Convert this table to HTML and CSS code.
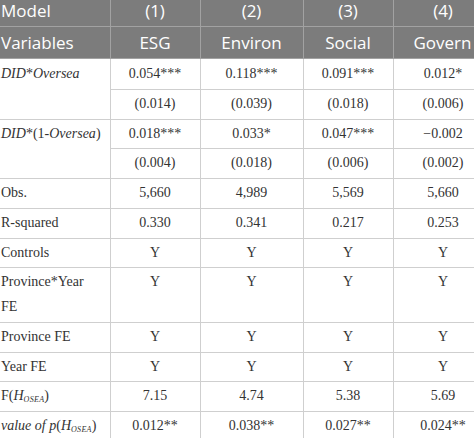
FILE: index.html
```html
<!DOCTYPE html>
<html>
<head>
<meta charset="utf-8">
<link rel="stylesheet" href="styles.css">
</head>
<body>
<table class="tbl">
  <colgroup>
    <col class="c0"><col class="c1"><col class="c2"><col class="c3"><col class="c4">
  </colgroup>
  <thead>
    <tr class="h1">
      <th class="lab">Model</th><th>(1)</th><th>(2)</th><th>(3)</th><th>(4)</th>
    </tr>
    <tr class="h2">
      <th class="lab">Variables</th><th>ESG</th><th>Environ</th><th>Social</th><th class="trunc">Govern</th>
    </tr>
  </thead>
  <tbody>
    <tr class="first">
      <td class="lab top nowrap" rowspan="2"><i>DID</i>*<i>Oversea</i></td>
      <td>0.054***</td><td>0.118***</td><td>0.091***</td><td>0.012*</td>
    </tr>
    <tr>
      <td>(0.014)</td><td>(0.039)</td><td>(0.018)</td><td>(0.006)</td>
    </tr>
    <tr>
      <td class="lab top nowrap" rowspan="2"><i>DID</i>*(1-<i>Oversea</i>)</td>
      <td>0.018***</td><td>0.033*</td><td>0.047***</td><td>−0.002</td>
    </tr>
    <tr>
      <td>(0.004)</td><td>(0.018)</td><td>(0.006)</td><td>(0.002)</td>
    </tr>
    <tr>
      <td class="lab">Obs.</td><td>5,660</td><td>4,989</td><td>5,569</td><td>5,660</td>
    </tr>
    <tr>
      <td class="lab">R-squared</td><td>0.330</td><td>0.341</td><td>0.217</td><td>0.253</td>
    </tr>
    <tr>
      <td class="lab">Controls</td><td>Y</td><td>Y</td><td>Y</td><td>Y</td>
    </tr>
    <tr class="tall">
      <td class="lab">Province*Year FE</td><td>Y</td><td>Y</td><td>Y</td><td>Y</td>
    </tr>
    <tr>
      <td class="lab">Province FE</td><td>Y</td><td>Y</td><td>Y</td><td>Y</td>
    </tr>
    <tr>
      <td class="lab">Year FE</td><td>Y</td><td>Y</td><td>Y</td><td>Y</td>
    </tr>
    <tr>
      <td class="lab">F(<i>H<sub>OSEA</sub></i>)</td><td>7.15</td><td>4.74</td><td>5.38</td><td>5.69</td>
    </tr>
    <tr>
      <td class="lab nowrap"><i>value of p</i>(<i>H<sub>OSEA</sub></i>)</td><td>0.012**</td><td>0.038**</td><td>0.027**</td><td>0.024**</td>
    </tr>
  </tbody>
</table>
</body>
</html>
```

FILE: styles.css
```css
html, body {
  margin: 0;
  padding: 0;
  background: #ffffff;
  overflow: hidden;
}

.tbl {
  border-collapse: collapse;
  table-layout: fixed;
  width: 493px;
}

.c0 { width: 110px; }
.c1 { width: 90px; }
.c2 { width: 103px; }
.c3 { width: 90px; }
.c4 { width: 100px; }

.tbl th {
  background: #7c7c7c;
  color: #ffffff;
  font-family: "Open Sans", "DejaVu Sans", sans-serif;
  font-weight: normal;
  font-size: 17px;
  text-align: center;
  padding: 0 4px;
  border: 1px solid #a2a2a2;
  border-top: none;
  white-space: nowrap;
  overflow: hidden;
}

.tbl th:first-child { border-left: none; }

.h1 th {
  height: 22px;
  line-height: 22px;
  padding-bottom: 4px;
}

.h2 th {
  height: 31px;
  line-height: 31px;
}

.tbl th.lab {
  text-align: left;
  padding-left: 1px;
}

.tbl th.trunc {
  text-align: left;
  padding-left: 20px;
  text-overflow: clip;
}

.tbl td {
  font-family: "Liberation Serif", "Times New Roman", serif;
  font-size: 14px;
  color: #333333;
  text-align: center;
  line-height: 24.75px;
  padding: 2px 4px;
  height: 24.75px;
  border: 1px solid #cfcfcf;
  vertical-align: middle;
}

.first td { padding-top: 3px; }

.tbl td:first-child { border-left: none; }

.tbl td.lab {
  text-align: left;
  padding-left: 1px;
  padding-right: 10px;
}

.tbl td.nowrap { white-space: nowrap; }

.tbl td.top { vertical-align: top; }

.tall td { vertical-align: top; }

.tbl sub {
  font-size: 8px;
  vertical-align: baseline;
  position: relative;
  top: 2px;
  letter-spacing: 0.3px;
  line-height: 0;
}
```
